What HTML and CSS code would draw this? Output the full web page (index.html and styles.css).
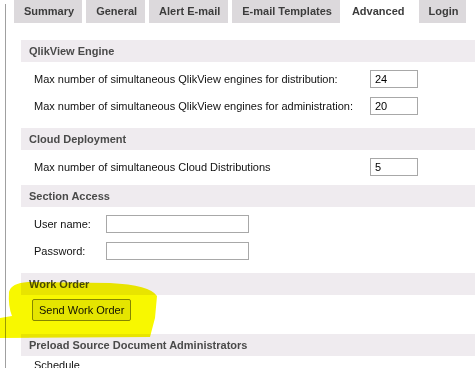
FILE: index.html
```html
<!DOCTYPE html>
<html lang="en">
<head>
    <meta charset="UTF-8">
    <meta name="viewport" content="width=device-width, initial-scale=1.0">
    <title>Distribution Service - Advanced</title>
    <link rel="stylesheet" href="styles.css">
</head>
<body>
    <div class="frame">
        <div class="tabs">
            <span class="tab">Summary</span>
            <span class="tab">General</span>
            <span class="tab">Alert E-mail</span>
            <span class="tab">E-mail Templates</span>
            <span class="tab active">Advanced</span>
            <span class="tab">Login</span>
        </div>

        <div class="panel">
            <div class="section">
                <div class="section-title">QlikView Engine</div>
                <div class="section-body">
                    <div class="field wide">
                        <label>Max number of simultaneous QlikView engines for distribution:</label>
                        <input type="text" class="num" value="24">
                    </div>
                    <div class="field wide">
                        <label>Max number of simultaneous QlikView engines for administration:</label>
                        <input type="text" class="num" value="20">
                    </div>
                </div>
            </div>

            <div class="section cloud">
                <div class="section-title">Cloud Deployment</div>
                <div class="section-body">
                    <div class="field wide">
                        <label>Max number of simultaneous Cloud Distributions</label>
                        <input type="text" class="num" value="5">
                    </div>
                </div>
            </div>

            <div class="section">
                <div class="section-title">Section Access</div>
                <div class="section-body">
                    <div class="field narrow">
                        <label>User name:</label>
                        <input type="text" class="text">
                    </div>
                    <div class="field narrow">
                        <label>Password:</label>
                        <input type="password" class="text">
                    </div>
                </div>
            </div>

            <div class="section work">
                <div class="section-title">Work Order</div>
                <div class="section-body">
                    <button class="btn">Send Work Order</button>
                </div>
            </div>

            <div class="section preload">
                <div class="section-title">Preload Source Document Administrators</div>
                <div class="section-body">
                    <div class="plain">Schedule</div>
                </div>
            </div>
        </div>
    </div>

    <!-- highlighter stroke drawn over the screenshot -->
    <svg class="marker" viewBox="0 278 160 62" width="160" height="62">
        <path d="M9 292 Q11 283 28 282 L110 283 Q150 285 157 296 L155 318 L150 337 L0 338 L0 318 L12 316 Q8 306 9 292 Z" fill="#f8f800"/>
    </svg>
</body>
</html>
```

FILE: styles.css
```css
body {
    margin: 0;
    padding: 0;
    background-color: white;
    font-family: "Liberation Sans", Arial, sans-serif;
    font-size: 11px;
    color: #111;
    overflow: hidden;
}

.frame {
    margin-left: 5px;
    min-height: 368px;
    position: relative;
}

/* thin grey rule down the left edge */
.frame::before {
    content: "";
    position: absolute;
    left: 0;
    top: 4px;
    bottom: 0;
    border-left: 1px solid #a0a0a0;
}

.tabs {
    display: flex;
    align-items: flex-start;
    height: 24px;
    padding-left: 9px;
}

.tab {
    height: 23px;
    line-height: 23px;
    padding: 0 8px 0 10px;
    margin-right: 4px;
    background-color: #dcd9dc;
    color: #3c3c3c;
    font-weight: bold;
    font-size: 11px;
    white-space: nowrap;
}

.tab.active {
    height: 24px;
    background-color: white;
    padding: 0 11px;
    margin-left: -3px;
    margin-right: 3px;
}

.panel {
    padding-top: 16px;
    margin-left: 16px;
}

.section-title {
    height: 22px;
    line-height: 22px;
    padding-left: 8px;
    background-color: #efebef;
    color: #4a4a4a;
    font-weight: bold;
}

.section-body {
    padding: 8px 0 4px 13px;
}

.cloud .section-body {
    padding-bottom: 0;
}

.field {
    display: flex;
    align-items: center;
    height: 18px;
    margin-bottom: 9px;
}

.field.wide label {
    width: 336px;
}

.field.narrow label {
    width: 72px;
}

input {
    box-sizing: border-box;
    height: 18px;
    border: 1px solid #a8a8a8;
    padding: 0 4px;
    font-family: "Liberation Sans", Arial, sans-serif;
    font-size: 11px;
    color: #000;
    background: white;
}

input.num {
    width: 48px;
}

input.text {
    width: 143px;
}

.work .section-body {
    padding: 4px 0 13px 11px;
}

.btn {
    height: 22px;
    padding: 0 6px;
    border: 1px solid #8a8a8a;
    border-radius: 2px;
    background-color: #ececec;
    font-family: "Liberation Sans", Arial, sans-serif;
    font-size: 11px;
    color: #111;
}

.preload .section-body {
    padding-top: 2px;
}

.plain {
    line-height: 14px;
}

.marker {
    position: absolute;
    left: 0;
    top: 278px;
    mix-blend-mode: multiply;
    pointer-events: none;
}
```
